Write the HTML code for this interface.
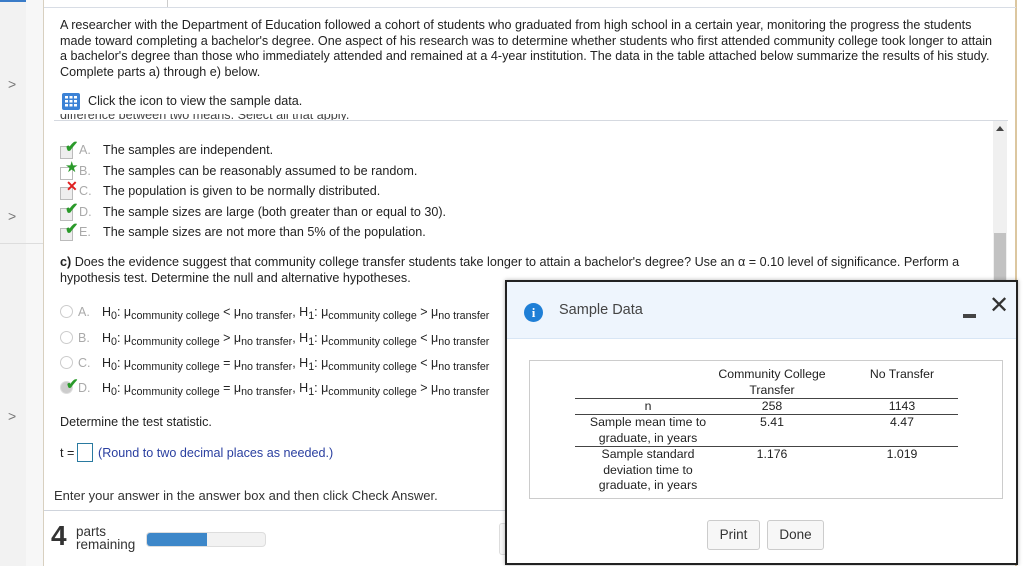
<!DOCTYPE html>
<html><head><meta charset="utf-8"><style>
*{margin:0;padding:0;box-sizing:border-box}
body{width:1024px;height:566px;overflow:hidden;position:relative;background:#fff;font-family:"Liberation Sans",Arial,sans-serif;color:#222;font-size:12.6px}
.a{position:absolute}
.opt{position:absolute;left:60px;font-size:12.6px;white-space:nowrap}
.lt{color:#aaa;display:inline-block;width:24px}
.cb{position:absolute;left:0;top:3px;width:13px;height:13px;border:1px solid #bbb;background:#eee}
sub{font-size:11px;vertical-align:-3px}
.rd{display:inline-block;width:13px;height:13px;border:1.5px solid #ccc;border-radius:50%;vertical-align:-2px;margin-right:5px}
.hy{position:absolute;left:60px;white-space:nowrap;font-size:12.5px}
.hy sub{font-size:10.7px}
</style></head><body>
<div class="a" style="left:0;top:0;width:26px;height:566px;background:#f2f2f2"></div>
<div class="a" style="left:0;top:0;width:26px;height:2px;background:#3a7cc8"></div>
<div class="a" style="left:26px;top:0;width:18px;height:566px;background:#f7f7f7"></div>
<div class="a" style="left:0;top:243px;width:44px;height:1px;background:#ddd"></div>
<div class="a" style="left:8px;top:76px;color:#777;font-size:14px">&gt;</div>
<div class="a" style="left:8px;top:208px;color:#777;font-size:14px">&gt;</div>
<div class="a" style="left:8px;top:408px;color:#777;font-size:14px">&gt;</div>
<div class="a" style="left:43px;top:0;width:974px;height:566px;background:#fff;border-left:1px solid #d8d0c0;border-right:2px solid #dcc7a0"></div>
<div class="a" style="left:44px;top:7px;width:972px;height:1px;background:#d8dde5"></div>
<div class="a" style="left:167px;top:0;width:1px;height:7px;background:#ccc"></div>
<div class="a" style="left:60px;top:18px;width:940px;font-size:12.6px;line-height:15.6px;color:#222">A researcher with the Department of Education followed a cohort of students who graduated from high school in a certain year, monitoring the progress the students made toward completing a bachelor's degree. One aspect of his research was to determine whether students who first attended community college took longer to attain a bachelor's degree than those who immediately attended and remained at a 4-year institution. The data in the table attached below summarize the results of his study. Complete parts a) through e) below.</div>
<svg class="a" style="left:62px;top:93px" width="18" height="17"><rect x="0" y="0" width="18" height="17" rx="2" fill="#3b82d6"/><g fill="#fff"><rect x="3" y="3" width="3" height="2.5"/><rect x="7.5" y="3" width="3" height="2.5"/><rect x="12" y="3" width="3" height="2.5"/><rect x="3" y="7" width="3" height="2.5"/><rect x="7.5" y="7" width="3" height="2.5"/><rect x="12" y="7" width="3" height="2.5"/><rect x="3" y="11" width="3" height="2.5"/><rect x="7.5" y="11" width="3" height="2.5"/><rect x="12" y="11" width="3" height="2.5"/></g></svg>
<div class="a" style="left:88px;top:94px;font-size:12.6px">Click the icon to view the sample data.</div>
<div class="a" style="left:54px;top:120px;width:954px;height:1px;background:#d5d9e0"></div>
<div class="a" style="left:60px;top:114px;font-size:12.6px;color:#444;height:6px;overflow:hidden;line-height:12px;width:400px"><div style="margin-top:-5px">difference between two means. Select all that apply.</div></div>
<div class="a" style="left:993px;top:121px;width:14px;height:160px;background:#f0f0f0"></div>
<div class="a" style="left:994px;top:233px;width:12px;height:50px;background:#c2c2c2"></div>
<div class="a" style="left:996px;top:126px;width:0;height:0;border-left:4px solid transparent;border-right:4px solid transparent;border-bottom:5px solid #444"></div>

<div class="opt" style="top:143px"><span class="cb"></span><span style="position:absolute;left:5px;top:-6px;color:#2a9a2a;font-size:16px;font-weight:bold">✔</span><span style="margin-left:19px" class="lt">A.</span>The samples are independent.</div>
<div class="opt" style="top:164px"><span class="cb" style="background:#fff"></span><span style="position:absolute;left:5px;top:-6px;color:#2a9a2a;font-size:15px">★</span><span style="margin-left:19px" class="lt">B.</span>The samples can be reasonably assumed to be random.</div>
<div class="opt" style="top:184px"><span class="cb"></span><span style="position:absolute;left:6px;top:-6px;color:#e02020;font-size:14px;font-weight:bold">✕</span><span style="margin-left:19px" class="lt">C.</span>The population is given to be normally distributed.</div>
<div class="opt" style="top:205px"><span class="cb"></span><span style="position:absolute;left:5px;top:-6px;color:#2a9a2a;font-size:16px;font-weight:bold">✔</span><span style="margin-left:19px" class="lt">D.</span>The sample sizes are large (both greater than or equal to 30).</div>
<div class="opt" style="top:225px"><span class="cb"></span><span style="position:absolute;left:5px;top:-6px;color:#2a9a2a;font-size:16px;font-weight:bold">✔</span><span style="margin-left:19px" class="lt">E.</span>The sample sizes are not more than 5% of the population.</div>

<div class="a" style="left:60px;top:254px;width:930px;font-size:12.6px;line-height:16px"><b>c)</b> Does the evidence suggest that community college transfer students take longer to attain a bachelor's degree? Use an α = 0.10 level of significance. Perform a hypothesis test. Determine the null and alternative hypotheses.</div>

<div class="hy" style="top:305px"><span class="rd"></span><span class="lt">A.</span>H<sub>0</sub>: μ<sub>community college</sub> &lt; μ<sub>no transfer</sub>, H<sub>1</sub>: μ<sub>community college</sub> &gt; μ<sub>no transfer</sub></div>
<div class="hy" style="top:331px"><span class="rd"></span><span class="lt">B.</span>H<sub>0</sub>: μ<sub>community college</sub> &gt; μ<sub>no transfer</sub>, H<sub>1</sub>: μ<sub>community college</sub> &lt; μ<sub>no transfer</sub></div>
<div class="hy" style="top:356px"><span class="rd"></span><span class="lt">C.</span>H<sub>0</sub>: μ<sub>community college</sub> = μ<sub>no transfer</sub>, H<sub>1</sub>: μ<sub>community college</sub> &lt; μ<sub>no transfer</sub></div>
<div class="hy" style="top:381px"><span class="rd" style="background:#ccc;border-color:#ddd"></span><span style="position:absolute;left:6px;top:-6px;color:#2a9a2a;font-size:15px;font-weight:bold">✔</span><span class="lt">D.</span>H<sub>0</sub>: μ<sub>community college</sub> = μ<sub>no transfer</sub>, H<sub>1</sub>: μ<sub>community college</sub> &gt; μ<sub>no transfer</sub></div>

<div class="a" style="left:60px;top:415px;font-size:12.6px">Determine the test statistic.</div>
<div class="a" style="left:60px;top:446px;font-size:12.6px">t =</div>
<div class="a" style="left:77px;top:443px;width:16px;height:19px;border:1px solid #2a7aa0"></div>
<div class="a" style="left:98px;top:446px;font-size:12.6px;color:#2a3fa0">(Round to two decimal places as needed.)</div>
<div class="a" style="left:54px;top:488px;font-size:13px;color:#333">Enter your answer in the answer box and then click Check Answer.</div>
<div class="a" style="left:44px;top:510px;width:972px;height:1px;background:#cfd4dc"></div>
<div class="a" style="left:51px;top:521px;font-size:28px;font-weight:bold;color:#333;line-height:30px">4</div>
<div class="a" style="left:76px;top:525px;font-size:13.5px;line-height:13px;color:#333">parts<br>remaining</div>
<div class="a" style="left:146px;top:532px;width:120px;height:15px;border-radius:4px;background:#f2f2f2;border:1px solid #ddd;overflow:hidden"><div style="width:60px;height:15px;background:#3d87c9"></div></div>
<div class="a" style="left:499px;top:523px;width:8px;height:32px;border:1px solid #ddd;border-radius:3px;background:#f7f7f7"></div>

<!-- modal -->
<div class="a" style="left:505px;top:280px;width:513px;height:285px;border:2px solid #222;background:#fff;box-shadow:0 0 4px rgba(0,0,0,.3)">
 <div style="position:absolute;left:0;top:0;width:509px;height:57px;background:#eef5fd;border-bottom:1px solid #d8e6f5"></div>
 <div style="position:absolute;left:17px;top:21px;width:19px;height:19px;border-radius:50%;background:#1f7fd6;color:#fff;font:bold 13px/19px 'Liberation Serif',serif;text-align:center">i</div>
 <div style="position:absolute;left:52px;top:20px;font-size:14.5px;color:#444">Sample Data</div>
 <div style="position:absolute;left:456px;top:32px;width:13px;height:4px;background:#444"></div>
 <div style="position:absolute;left:482px;top:12px;font-size:24px;color:#333;line-height:24px">✕</div>
 <div style="position:absolute;left:22px;top:78px;width:474px;height:139px;border:1px solid #ccc"></div>
 <div style="position:absolute;left:68px;top:116px;width:383px;border-top:1px solid #444"></div>
 <div style="position:absolute;left:68px;top:132px;width:383px;border-top:1px solid #444"></div>
 <div style="position:absolute;left:68px;top:164px;width:383px;border-top:1px solid #444"></div>
 <div style="position:absolute;left:200px;top:85px;width:130px;text-align:center;font-size:12.3px;line-height:15.5px">Community College Transfer</div>
 <div style="position:absolute;left:330px;top:85px;width:130px;text-align:center;font-size:12.3px">No Transfer</div>
 <div style="position:absolute;left:66px;top:117px;width:150px;text-align:center;font-size:12.3px">n</div>
 <div style="position:absolute;left:200px;top:117px;width:130px;text-align:center;font-size:12.3px">258</div>
 <div style="position:absolute;left:330px;top:117px;width:130px;text-align:center;font-size:12.3px">1143</div>
 <div style="position:absolute;left:66px;top:133px;width:150px;text-align:center;font-size:12.3px;line-height:15.5px">Sample mean time to graduate, in years</div>
 <div style="position:absolute;left:200px;top:133px;width:130px;text-align:center;font-size:12.3px">5.41</div>
 <div style="position:absolute;left:330px;top:133px;width:130px;text-align:center;font-size:12.3px">4.47</div>
 <div style="position:absolute;left:66px;top:165px;width:150px;text-align:center;font-size:12.3px;line-height:15.7px">Sample standard<br>deviation time to<br>graduate, in years</div>
 <div style="position:absolute;left:200px;top:165px;width:130px;text-align:center;font-size:12.3px">1.176</div>
 <div style="position:absolute;left:330px;top:165px;width:130px;text-align:center;font-size:12.3px">1.019</div>
 <div style="position:absolute;left:200px;top:238px;width:53px;height:30px;border:1px solid #ccc;border-radius:3px;background:#f7f7f7;text-align:center;line-height:28px;font-size:13.5px;color:#333">Print</div>
 <div style="position:absolute;left:260px;top:238px;width:57px;height:30px;border:1px solid #ccc;border-radius:3px;background:#f7f7f7;text-align:center;line-height:28px;font-size:13.5px;color:#333">Done</div>
</div>
</body></html>
